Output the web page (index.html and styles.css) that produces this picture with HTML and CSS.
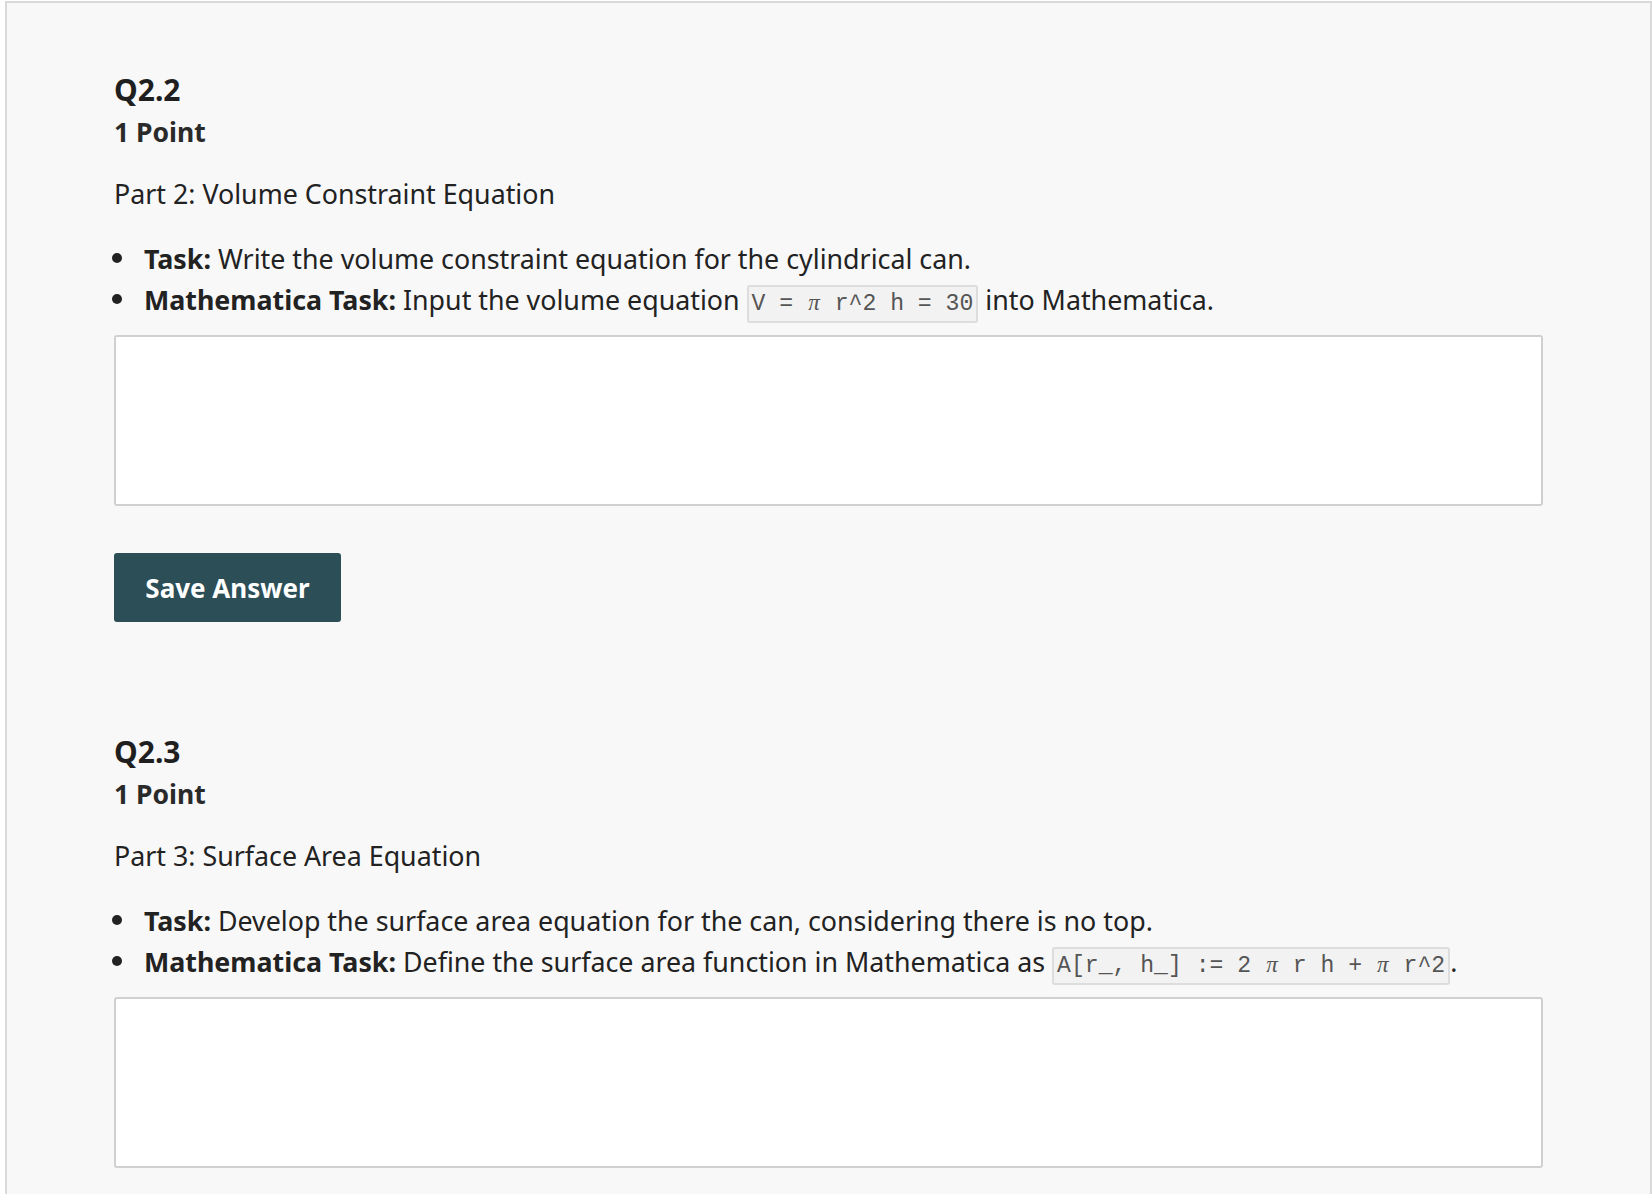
FILE: index.html
```html
<!DOCTYPE html>
<html lang="en">
<head>
<meta charset="utf-8">
<title>Questions</title>
<link rel="stylesheet" href="styles.css">
</head>
<body>
<div class="panel">
  <section class="question">
    <h2 class="q-title">Q2.2</h2>
    <div class="q-points">1 Point</div>
    <p class="q-text">Part 2: Volume Constraint Equation</p>
    <ul class="q-list">
      <li><strong>Task:</strong> Write the volume constraint equation for the cylindrical can.</li>
      <li><strong>Mathematica Task:</strong> Input the volume equation <code class="code">V = <span class="pi">π</span> r^2 h = 30</code> into Mathematica.</li>
    </ul>
    <textarea class="answer" aria-label="Answer for Q2.2"></textarea>
    <button class="save" type="button">Save Answer</button>
  </section>
  <section class="question">
    <h2 class="q-title">Q2.3</h2>
    <div class="q-points">1 Point</div>
    <p class="q-text">Part 3: Surface Area Equation</p>
    <ul class="q-list">
      <li><strong>Task:</strong> Develop the surface area equation for the can, considering there is no top.</li>
      <li><strong>Mathematica Task:</strong> Define the surface area function in Mathematica as <code class="code">A[r_, h_] := 2 <span class="pi">π</span> r h + <span class="pi">π</span> r^2</code>.</li>
    </ul>
    <textarea class="answer" aria-label="Answer for Q2.3"></textarea>
  </section>
</div>
</body>
</html>
```

FILE: styles.css
```css
html, body {
  margin: 0;
  padding: 0;
  background: #ffffff;
}

body {
  font-family: "Noto Sans", "Open Sans", sans-serif;
  color: #222222;
  overflow: hidden;
}

.panel {
  margin: 1px 0 0 5px;
  border-top: 2px solid #d9d9d9;
  border-left: 2px solid #d9d9d9;
  border-right: 2px solid #d9d9d9;
  background: #f8f8f8;
  padding: 69px 107px 60px 107px;
  min-height: 1200px;
}

.question + .question {
  margin-top: 112px;
}

.q-title {
  margin: 0;
  font-size: 30px;
  line-height: 36px;
  font-weight: 700;
  color: #1f1f1f;
}

.q-points {
  margin-top: 8px;
  font-size: 26.5px;
  line-height: 32px;
  font-weight: 700;
  color: #2a2a2a;
}

.q-text {
  margin: 27px 0 0;
  font-size: 26.8px;
  line-height: 38px;
}

.q-list {
  margin: 25px 0 0;
  padding-left: 30px;
  list-style: none;
  font-size: 26.8px;
  line-height: 41px;
}

.q-list li {
  position: relative;
}

.q-list li::before {
  content: "";
  position: absolute;
  left: -32px;
  top: 15px;
  width: 10px;
  height: 10px;
  border-radius: 50%;
  background: #222222;
}

.q-list strong {
  font-weight: 700;
}

.code {
  font-family: "Liberation Mono", "Courier New", monospace;
  font-size: 23.1px;
  line-height: 1;
  color: #555555;
  background: #f2f2f2;
  border: 2px solid #dddddd;
  border-radius: 3px;
  padding: 4px 3px;
}

.pi {
  display: inline-block;
  width: 0.6em;
  text-align: center;
  font-family: "Liberation Serif", "DejaVu Serif", serif;
  font-style: italic;
}

.answer {
  display: block;
  box-sizing: border-box;
  width: 100%;
  height: 171px;
  margin-top: 15px;
  background: #ffffff;
  border: 2px solid #d0d0d0;
  border-radius: 3px;
  resize: none;
  font-family: "Noto Sans", sans-serif;
  font-size: 26px;
}

.save {
  display: block;
  margin-top: 47px;
  width: 227px;
  height: 69px;
  padding: 0;
  border: none;
  border-radius: 3px;
  background: #2b4e57;
  color: #ffffff;
  font-family: "Noto Sans", "Open Sans", sans-serif;
  font-size: 26px;
  font-weight: 700;
  text-align: center;
}
```
